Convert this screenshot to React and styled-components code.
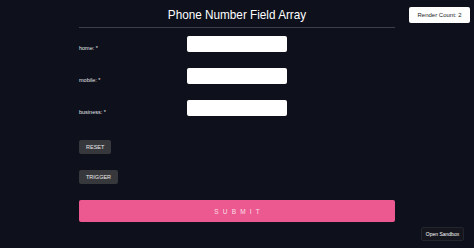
import styled, { createGlobalStyle } from "styled-components";

const GlobalStyle = createGlobalStyle`
    html, body {
        margin: 0;
        padding: 0;
        background: #0e101c;
    }
    body {
        font-family: "Liberation Sans", Arial, sans-serif;
        color: #fff;
    }
`

const fields = [
    {name: "home", label: "home: *"},
    {name: "mobile", label: "mobile: *"},
    {name: "business", label: "business: *"},
]

const Page = styled.div`
    position: relative;
    width: 474px;
    height: 248px;
    overflow: hidden;
`

const Form = styled.form`
    width: 316px;
    margin: 0 auto;
    padding-top: 6px;
    display: flex;
    flex-direction: column;
`

const Heading = styled.h1`
    margin: 0;
    height: 18px;
    line-height: 18px;
    font-size: 13.5px;
    font-weight: 400;
    text-align: center;
    color: #fff;
    transform: scaleX(0.87);
`

const Rule = styled.hr`
    margin: 3px 0 8px;
    border: none;
    border-top: 1px solid #3b3e4b;
`

const Fields = styled.div`
    display: flex;
    flex-direction: column;
    gap: 16px;
`

const Row = styled.div`
    display: flex;
    align-items: center;
    height: 16px;
`

const Label = styled.label`
    width: 108px;
    padding-top: 8px;
    font-size: 5.5px;
    color: #e6e6ea;
`

const Input = styled.input`
    box-sizing: border-box;
    width: 100px;
    height: 16px;
    border: none;
    border-radius: 2px;
    background: #fff;
    padding: 0 4px;
`

const Actions = styled.div`
    display: flex;
    flex-direction: column;
    align-items: flex-start;
    gap: 16px;
    margin-top: 24px;
`

const Button = styled.button`
    height: 14px;
    padding: 0 ${p => p.$pad}px;
    border: none;
    border-radius: 2px;
    background: #37383c;
    color: #e8e8e8;
    font-family: "Liberation Sans", Arial, sans-serif;
    font-size: 5.5px;
    text-transform: uppercase;
`

const Submit = styled.button`
    margin-top: 16px;
    height: 22px;
    border: none;
    border-radius: 2px;
    background: #ec5990;
    color: rgba(255, 255, 255, 0.8);
    font-family: "Liberation Sans", Arial, sans-serif;
    font-size: 6.5px;
    letter-spacing: 4.2px;
    text-indent: 4.2px;
    text-transform: uppercase;
`

const RenderCount = styled.div`
    position: absolute;
    top: 7px;
    right: 4px;
    width: 61px;
    height: 16px;
    box-sizing: border-box;
    display: flex;
    align-items: center;
    justify-content: center;
    background: #fff;
    border-radius: 2px;
    color: #222;
    font-size: 6px;
`

const SandboxLink = styled.a`
    position: absolute;
    right: 10px;
    bottom: 7px;
    width: 43px;
    height: 14px;
    box-sizing: border-box;
    display: flex;
    align-items: center;
    justify-content: center;
    background: #15161d;
    border: 1px solid #23252d;
    border-radius: 2px;
    color: #fff;
    font-size: 5px;
    text-decoration: none;
`

export default function App() {
    return (
        <Page>
            <GlobalStyle/>
            <Form onSubmit={e => e.preventDefault()}>
                <Heading>Phone Number Field Array</Heading>
                <Rule/>
                <Fields>
                    {fields.map(f => (
                        <Row key={f.name}>
                            <Label htmlFor={f.name}>{f.label}</Label>
                            <Input id={f.name} name={f.name}/>
                        </Row>
                    ))}
                </Fields>
                <Actions>
                    <Button type="button" $pad={7}>Reset</Button>
                    <Button type="button" $pad={7}>Trigger</Button>
                </Actions>
                <Submit type="submit">Submit</Submit>
            </Form>
            <RenderCount>Render Count: 2</RenderCount>
            <SandboxLink href="#">Open Sandbox</SandboxLink>
        </Page>
    )
}
